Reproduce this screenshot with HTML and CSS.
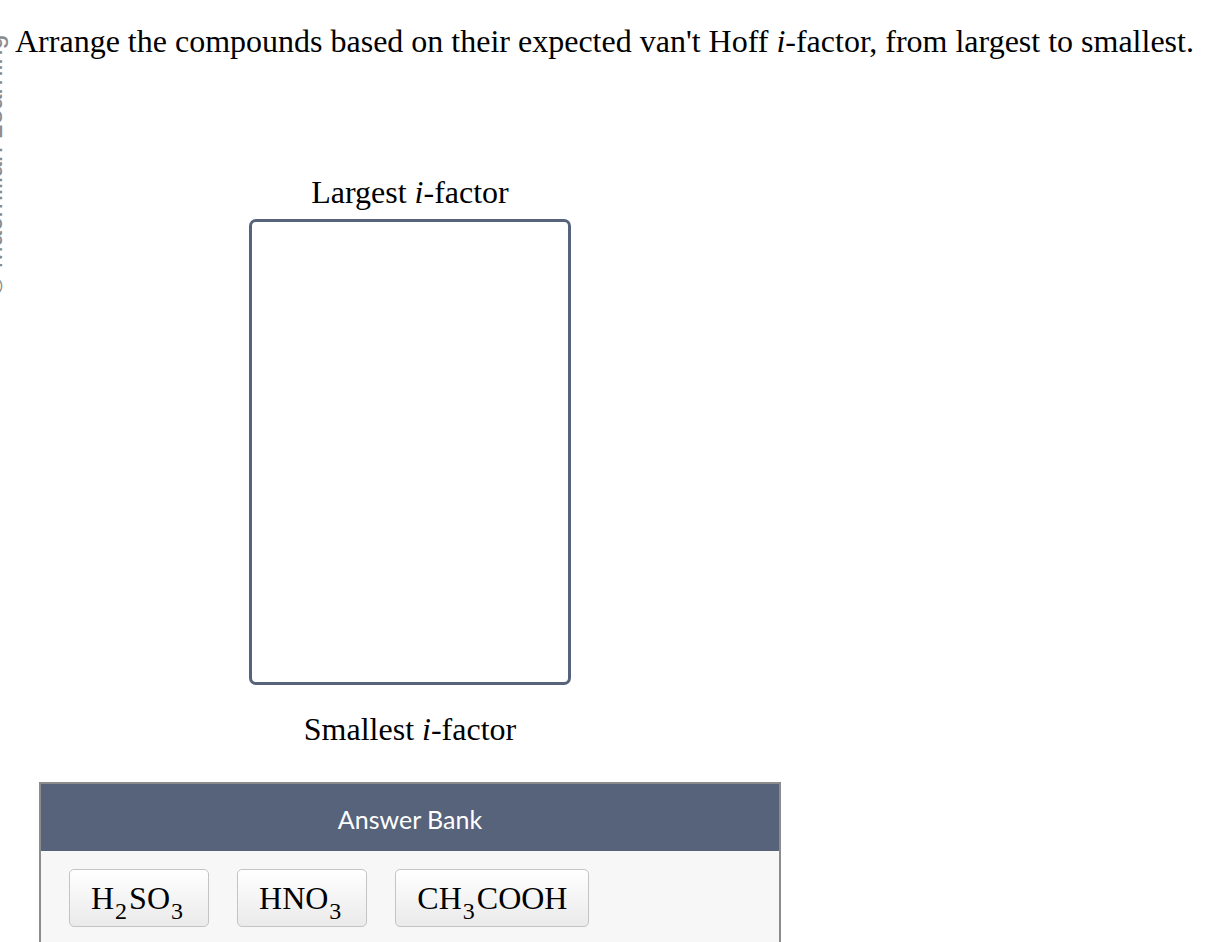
FILE: index.html
```html
<!DOCTYPE html>
<html lang="en">
<head>
<meta charset="utf-8">
<title>Ranking question</title>
<link rel="stylesheet" href="styles.css">
</head>
<body>
<span class="watermark">© Macmillan Learning</span>
<main class="question">
  <p class="prompt">Arrange the compounds based on their expected van't Hoff <i>i</i>-factor, from largest to smallest.</p>
  <div class="workspace">
    <div class="ranking">
      <div class="rank-label">Largest <i>i</i>-factor</div>
      <div class="drop-zone"></div>
      <div class="rank-label rank-label-bottom">Smallest <i>i</i>-factor</div>
    </div>
    <section class="answer-bank">
      <header class="bank-title">Answer Bank</header>
      <div class="bank-items">
        <button class="chip" type="button">H<sub>2</sub>SO<sub class="sub-end">3</sub></button>
        <button class="chip" type="button">HNO<sub class="sub-end">3</sub></button>
        <button class="chip" type="button">CH<sub>3</sub>COOH</button>
      </div>
    </section>
  </div>
</main>
</body>
</html>
```
FILE: styles.css
```css
html, body {
  margin: 0;
  padding: 0;
  background: #ffffff;
}

body {
  width: 1208px;
  height: 942px;
  overflow: hidden;
  position: relative;
  font-family: "Liberation Serif", "Times New Roman", serif;
  color: #000;
}

/* rotated copyright strip along the left edge, mostly off-canvas */
.watermark {
  position: absolute;
  left: -20px;
  top: 296px;
  transform-origin: 0 0;
  transform: rotate(-90deg);
  font-family: "Liberation Sans", Arial, sans-serif;
  font-size: 27px;
  line-height: 1;
  color: #8a8a8a;
  white-space: nowrap;
}

.question {
  padding-top: 23px;
}

.prompt {
  margin: 0 0 0 15px;
  font-size: 32px;
  line-height: 36px;
  white-space: nowrap;
}

.workspace {
  margin: 115px 0 0 39px;
  width: 742px;
}

.ranking {
  display: flex;
  flex-direction: column;
  align-items: center;
}

.rank-label {
  font-size: 32px;
  line-height: 36px;
}

.drop-zone {
  box-sizing: border-box;
  margin-top: 9px;
  width: 322px;
  height: 466px;
  border: 3px solid #56637a;
  border-radius: 7px;
  background: #fff;
}

.rank-label-bottom {
  margin-top: 26px;
}

.answer-bank {
  margin-top: 35px;
  border: 2px solid #8c8c8c;
  border-bottom: none;
  background: #f7f7f7;
}

.bank-title {
  height: 67px;
  background: #56637a;
  color: #ffffff;
  font-family: Lato, "Open Sans", sans-serif;
  font-size: 25px;
  display: flex;
  align-items: center;
  justify-content: center;
  padding-top: 2px;
  box-sizing: border-box;
}

.bank-items {
  display: flex;
  gap: 28px;
  padding: 18px 28px;
  height: 120px;
}

.chip {
  box-sizing: border-box;
  height: 58px;
  padding: 0 21px 1px;
  border: 1px solid #c4c4c4;
  border-radius: 5px;
  background: linear-gradient(#ffffff, #eaeaea);
  font-family: "Liberation Serif", "Times New Roman", serif;
  font-size: 32px;
  color: #000;
  line-height: 1;
  cursor: pointer;
}

.chip sub {
  font-size: 24px;
  vertical-align: -10px;
  line-height: 0;
  margin: 0 2px 0 1px;
}

/* a subscript that closes the formula keeps a little room before the edge */
.chip .sub-end {
  margin-right: 4px;
}
```
